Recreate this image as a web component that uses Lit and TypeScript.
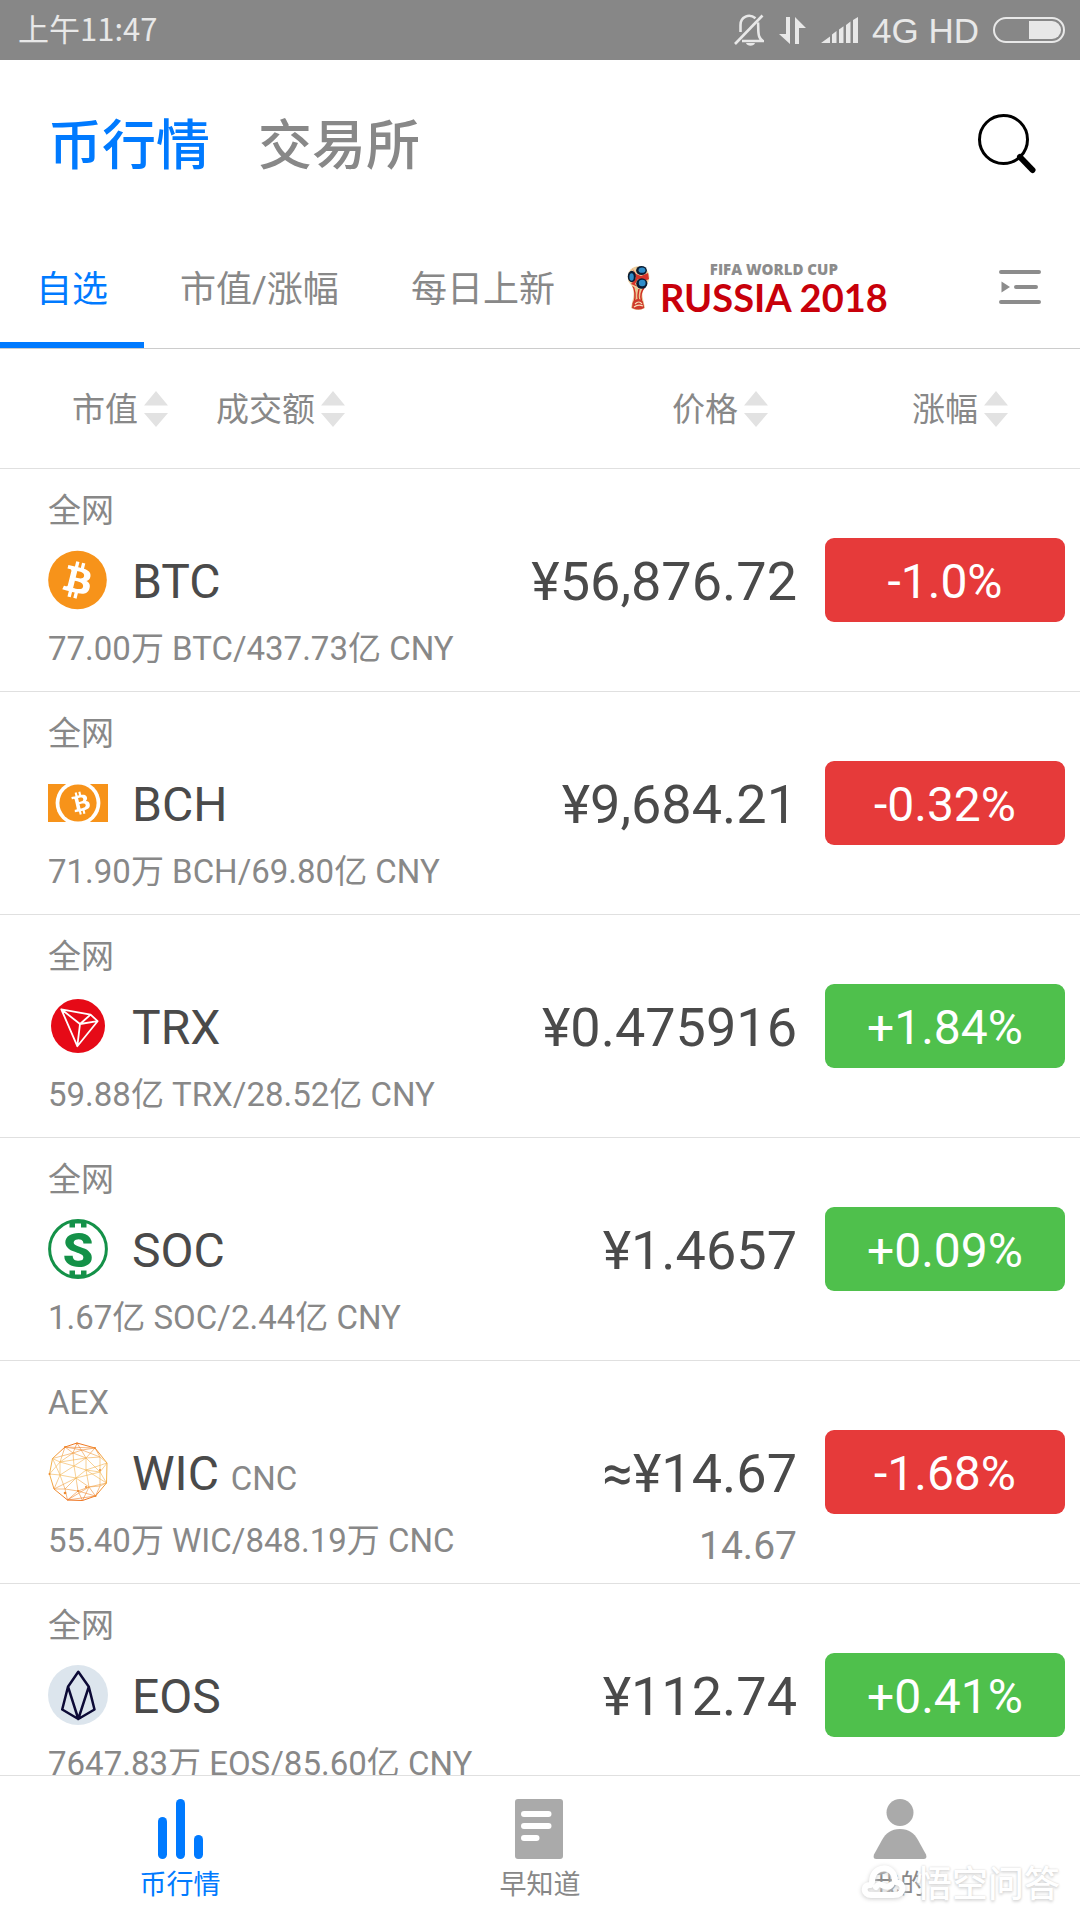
import { LitElement, html, css, svg } from "lit";
import { customElement, property, state } from "lit/decorators.js";
import { classMap } from "lit/directives/class-map.js";

interface Coin {
  market: string;
  symbol: string;
  pair?: string;
  volume: string;
  price: string;
  sub?: string;
  change: string;
}

const COINS: Coin[] = [
  { market: "全网", symbol: "BTC", volume: "77.00万 BTC/437.73亿 CNY", price: "¥56,876.72", change: "-1.0%" },
  { market: "全网", symbol: "BCH", volume: "71.90万 BCH/69.80亿 CNY", price: "¥9,684.21", change: "-0.32%" },
  { market: "全网", symbol: "TRX", volume: "59.88亿 TRX/28.52亿 CNY", price: "¥0.475916", change: "+1.84%" },
  { market: "全网", symbol: "SOC", volume: "1.67亿 SOC/2.44亿 CNY", price: "¥1.4657", change: "+0.09%" },
  { market: "AEX", symbol: "WIC", pair: "CNC", volume: "55.40万 WIC/848.19万 CNC", price: "≈¥14.67", sub: "14.67", change: "-1.68%" },
  { market: "全网", symbol: "EOS", volume: "7647.83万 EOS/85.60亿 CNY", price: "¥112.74", change: "+0.41%" },
];

const COIN_MARK =
  "M23.189 14.02c.314-2.096-1.283-3.223-3.465-3.975l.708-2.84-1.728-.43-.69 2.765c-.454-.114-.92-.22-1.385-.326l.695-2.783L15.596 6l-.708 2.839c-.376-.086-.746-.17-1.104-.26l.002-.009-2.384-.595-.46 1.846s1.283.294 1.256.312c.7.175.826.638.805 1.006l-.806 3.235c.048.012.11.03.18.057l-.183-.045-1.13 4.532c-.086.212-.303.531-.793.41.018.025-1.256-.313-1.256-.313l-.858 1.978 2.25.561c.418.105.828.215 1.231.318l-.715 2.872 1.727.43.708-2.84c.472.127.93.245 1.378.357l-.706 2.828 1.728.43.715-2.866c2.948.558 5.164.333 6.097-2.333.752-2.146-.037-3.385-1.588-4.192 1.13-.26 1.98-1.003 2.207-2.538zm-3.95 5.538c-.533 2.147-4.148.986-5.32.695l.95-3.805c1.172.293 4.929.872 4.37 3.11zm.535-5.569c-.487 1.953-3.495.96-4.47.717l.86-3.45c.975.243 4.118.696 3.61 2.733z";

const COIN_ICONS: Record<string, unknown> = {
  BTC: svg`
    <circle cx="29.500" cy="30" r="29.300" fill="#f7931a"/>
    <path d="${COIN_MARK}" fill="#fff" transform="translate(-1) scale(1.875)"/>`,
  BCH: svg`
    <rect y="11" width="60" height="38" fill="#f7931a"/>
    <clipPath id="bch"><rect y="11" width="60" height="38"/></clipPath>
    <circle cx="30" cy="30" r="22.400" fill="#fff"/>
    <circle cx="30" cy="30" r="18.600" fill="#f7931a" clip-path="url(#bch)"/>
    <path d="${COIN_MARK}" fill="#fff" transform="translate(32.4 30) rotate(-27) scale(1.17) translate(-16 -16)"/>`,
  TRX: svg`
    <circle cx="30" cy="30" r="27" fill="#e60a17"/>
    <path d="M13.3 13.3 42.6 18.6 49.6 25.2 29.3 50.2ZM13.3 13.3 32 28 29.3 50.2M32 28 42.6 18.6M32 28 49.6 25.2"
      fill="none" stroke="#fff" stroke-width="1.8" stroke-linejoin="round"/>`,
  SOC: svg`
    <circle cx="30" cy="30" r="28.4" fill="#fff" stroke="#149148" stroke-width="3"/>
    <path d="M21.5 3h17v5.5h-5.500v-4h-6v4h-5.500zM21.500 57h17v-5.500h-5.500v4h-6v-4h-5.500z" fill="#149148"/>
    <text x="30" y="47.500" text-anchor="middle" font-family="Roboto, sans-serif" font-weight="900" font-size="49" fill="#149148">S</text>`,
  WIC: svg`
    <linearGradient id="wic" x1="0" y1="0" x2="0" y2="1">
      <stop offset="0" stop-color="#ee7420"/><stop offset=".3" stop-color="#f3b04c"/>
      <stop offset=".6" stop-color="#f2b44e"/><stop offset="1" stop-color="#ee7420"/>
    </linearGradient>
    <g fill="none" stroke="url(#wic)" stroke-linejoin="round">
      <path stroke-width="1" d="M29 1 17 5 4.500 16.500 1.500 32 6 47 19.500 58 34.500 58.500 47.500 54 58.500 41 59 21 47 6Z"/>
      <path stroke-width=".6" d="M29 1 38 16 47 6 17 5 25 11 29 1M17 5 12 20 4.500 16.500 25 11 38 16 52 15 47 6M52 15 59 21 38 28 38 16 26 24 25 11 12 20 26 24 38 28 28 36 26 24 12 33 12 20 1.500 32 12 33 28 36 17 47 12 33 6 47 17 47 19.500 58 30 49 17 47M30 49 28 36 41 45 38 28 58.500 41 41 45 30 49 34.500 58.500 41 45 47.500 54 52 44 41 45M52 44 52 30 59 21M52 15 52 30 38 28M52 30 58.500 41 52 44M17 5 34 8 47 6M34 8 52 15M25 11 34 8M6 47 28 36 52 30M4.500 16.500 12 33M19.500 58 41 45M30 49 47.500 54 19.500 58M12 20 38 16 52 30"/>
    </g>
    <g fill="#ee8a30">
      <circle cx="29" cy="1.500" r="1"/><circle cx="17" cy="5" r="1"/><circle cx="47" cy="6" r="1"/>
      <circle cx="17" cy="51" r="1.300"/><circle cx="30" cy="49" r="1"/><circle cx="52" cy="28" r="1"/>
      <circle cx="38" cy="45" r="1"/><circle cx="1.500" cy="32" r="1"/><circle cx="47.500" cy="54" r="1"/>
    </g>`,
  EOS: svg`
    <circle cx="30" cy="30" r="30" fill="#dce5ed"/>
    <path d="M30.300 6.800 20 21.700 14.200 44.500 30.300 54 46.500 44.500 40.800 21.700ZM20 21.700 30.300 54 40.800 21.700"
      fill="none" stroke="#0c0a36" stroke-width="2.500" stroke-linejoin="round"/>`,
};

@customElement("status-bar")
class StatusBar extends LitElement {
  static styles = css`
    :host {
      display: flex;
      align-items: center;
      justify-content: space-between;
      height: 60px;
      padding: 0 15px 0 18px;
      background: #878787;
      color: #e8e8e8;
    }
    .time {
      font: 400 31px/56px "Noto Sans CJK SC", sans-serif;
      padding-bottom: 4px;
    }
    .status,
    .icons {
      display: flex;
      align-items: center;
    }
    .status {
      gap: 14px;
    }
    .icons {
      gap: 15px;
    }
    .net {
      font: 35px/58px "Liberation Sans", sans-serif;
      padding-top: 2px;
    }
    svg {
      display: block;
    }
  `;

  render() {
    return html`
      <span class="time">上午11:47</span>
      <div class="status">
        <div class="icons">
          <svg width="30" height="32" viewBox="0 0 30 32" fill="none" stroke="#e8e8e8" stroke-width="2.6">
            <path d="M21.500 4.300C15 -1 6.500 3 6.500 11v7M24 8.500c.6 4-.3 10 1.200 14 .7 2.300 2 3.400 3.800 4.500H8" />
            <path d="M1 30 28.500 1.500" stroke-width="2.600" />
            <path d="M12 29h9c-1 3.500-8 3.500-9 0z" fill="#e8e8e8" stroke="none" />
          </svg>
          <svg width="27" height="27" viewBox="0 0 27 27" fill="#e8e8e8">
            <path d="M7 0h4v27L0 17h7zM20 27h-4V0l11 11h-7z" />
          </svg>
          <svg width="37" height="26" viewBox="0 0 37 26" fill="#e8e8e8">
            <path d="M0 26 9 19.500V26zM11 17.500 15.500 14v12H11zM18 12.500 22.500 9.200V26H18zM25 8 29.500 4.500V26H25zM32 3 37 0v26h-5z" />
          </svg>
        </div>
        <span class="net">4G HD</span>
        <svg width="72" height="26" viewBox="0 0 72 26">
          <rect x="1" y="1" width="70" height="24" rx="12" fill="none" stroke="#e8e8e8" stroke-width="2" />
          <path d="M36 4h23a9 9 0 0 1 0 18H36z" fill="#e8e8e8" />
        </svg>
      </div>
    `;
  }
}

@customElement("coin-row")
class CoinRow extends LitElement {
  @property({ attribute: false }) coin!: Coin;

  static styles = css`
    :host {
      display: grid;
      grid-template-columns: 1fr auto 240px;
      grid-template-rows: 44px 84px 48px;
      grid-template-areas:
        "market . ."
        "name price change"
        "volume sub .";
      column-gap: 28px;
      row-gap: 7px;
      padding: 18px 15px 14px 48px;
      border-bottom: 1px solid #e0e0e0;
      white-space: nowrap;
    }
    .market {
      grid-area: market;
      font-size: 33px;
      line-height: 48px;
      color: #888;
    }
    .name {
      grid-area: name;
      display: flex;
      align-items: center;
      gap: 24px;
    }
    .symbol {
      padding-top: 4px;
      font-size: 48px;
      line-height: 56px;
      color: #4a4a4a;
    }
    .pair {
      font-size: 33px;
      line-height: 33px;
      color: #888;
    }
    .volume {
      grid-area: volume;
      font-size: 33px;
      line-height: 40px;
      color: #888;
      width: 0;
    }
    .price {
      grid-area: price;
      justify-self: end;
      padding-top: 4px;
      font-size: 54px;
      line-height: 80px;
      color: #4a4a4a;
    }
    .sub {
      grid-area: sub;
      justify-self: end;
      font-size: 39px;
      line-height: 50px;
      color: #888;
    }
    .change {
      grid-area: change;
      padding-top: 4px;
      border-radius: 9px;
      font-size: 48px;
      line-height: 80px;
      text-align: center;
      color: #fff;
      background: #4fc04c;
    }
    .down {
      background: #e63a3a;
    }
    svg {
      display: block;
      flex: none;
    }
  `;

  render() {
    const c = this.coin;
    return html`
      <span class="market">${c.market}</span>
      <div class="name">
        <svg width="60" height="60" viewBox="0 0 60 60" aria-hidden="true">${COIN_ICONS[c.symbol]}</svg>
        <span class="symbol">${c.symbol}${c.pair ? html` <span class="pair">${c.pair}</span>` : ""}</span>
      </div>
      <span class="price">${c.price}</span>
      <span class=${classMap({ change: true, down: c.change.startsWith("-") })}>${c.change}</span>
      <span class="volume">${c.volume}</span>
      ${c.sub ? html`<span class="sub">${c.sub}</span>` : ""}
    `;
  }
}

@customElement("app-root")
class AppRoot extends LitElement {
  @state() private tab = 0;

  static styles = css`
    :host {
      display: flex;
      flex-direction: column;
      height: 100vh;
      background: #fff;
      font-family: "Roboto", "Noto Sans CJK SC", sans-serif;
      color: #888;
    }
    button {
      border: 0;
      padding: 0;
      background: none;
      font: inherit;
      color: inherit;
      cursor: pointer;
    }
    svg {
      display: block;
      flex: none;
    }
    .head {
      display: flex;
      align-items: center;
      gap: 48px;
      height: 168px;
      padding: 0 42px 0 48px;
    }
    .title {
      padding-top: 6px;
      font-size: 54px;
      line-height: 64px;
      font-weight: 500;
    }
    .on,
    .title.on {
      color: #007aff;
    }
    .search,
    .menu {
      margin-left: auto;
    }
    .tabs {
      display: flex;
      align-items: stretch;
      height: 120px;
      padding-right: 39px;
      border-bottom: 1px solid #ccc;
    }
    .tab {
      padding: 10px 36px 0;
      border-bottom: 6px solid transparent;
      font-size: 36px;
      line-height: 48px;
      white-space: nowrap;
    }
    .tab.on {
      border-bottom-color: #007aff;
    }
    .cup {
      display: flex;
      align-items: center;
      gap: 10px;
      margin-left: 36px;
      text-decoration: none;
      white-space: nowrap;
    }
    .cup-text {
      display: flex;
      flex-direction: column;
      align-items: center;
    }
    .cup-top {
      font: 800 15px/18px "Open Sans", sans-serif;
      color: #8c8c8c;
    }
    .cup-main {
      font: 700 38px/38px "Lato", sans-serif;
      color: #c8000a;
    }
    .sorts {
      display: flex;
      align-items: center;
      gap: 48px;
      height: 119px;
      padding: 0 72px;
      border-bottom: 1px solid #e0e0e0;
    }
    .sort {
      display: flex;
      align-items: center;
      gap: 6px;
      font-size: 33px;
      line-height: 40px;
    }
    .label {
      padding-top: 2px;
    }
    .right {
      display: flex;
      gap: 144px;
      margin-left: auto;
    }
    .list {
      flex: 1;
      min-height: 0;
      overflow-y: auto;
      scrollbar-width: none;
      margin: 0;
      padding: 0;
      list-style: none;
    }
    .nav {
      position: relative;
      display: grid;
      grid-template-columns: repeat(3, 1fr);
      height: 144px;
      border-top: 1px solid #e0e0e0;
    }
    .item {
      display: flex;
      flex-direction: column;
      align-items: center;
      gap: 10px;
      padding-top: 23px;
      font-size: 27px;
      line-height: 32px;
      color: #888;
      text-decoration: none;
    }
    .item.on {
      color: #007aff;
    }
    .mark {
      position: absolute;
      right: 20px;
      bottom: 17px;
      display: flex;
      align-items: center;
      gap: 10px;
      font: 500 36px/44px "Noto Sans CJK SC", sans-serif;
      color: #fff;
      text-shadow: 0 0 2px #ccc, 0 2px 3px #ddd;
      pointer-events: none;
    }
    .mark svg {
      filter: drop-shadow(0 1px 2px #ccc);
    }
  `;

  private sort(label: string) {
    return html`<button class="sort">
      <span class="label">${label}</span>
      <svg width="24" height="36" viewBox="0 0 24 36" fill="#e2e2e2"><path d="M12 0 24 14.500H0zM12 36 0 22h24z" /></svg>
    </button>`;
  }

  render() {
    return html`
      <status-bar></status-bar>
      <header class="head">
        <button class="title on">币行情</button>
        <button class="title">交易所</button>
        <button class="search" aria-label="搜索">
          <svg width="60" height="60" viewBox="0 0 60 60" fill="none" stroke="#000">
            <ellipse cx="25.500" cy="25.500" rx="24" ry="24" stroke-width="3" />
            <path d="M42 43 54.500 56" stroke-width="6" stroke-linecap="round" />
          </svg>
        </button>
      </header>
      <div class="tabs">
        ${["自选", "市值/涨幅", "每日上新"].map(
          (t, i) => html`<button class=${classMap({ tab: true, on: this.tab === i })} @click=${() => (this.tab = i)}>${t}</button>`
        )}
        <a class="cup" href="#cup">
          <svg width="23" height="46" viewBox="0 0 23 46">
            <path d="M3 15C6 23 8 27 5.500 36L4 43q7 4 14 0L16 34c-2-7 1-12 4-18z" fill="#e9c894" />
            <path d="M5 19C9 26 9 31 7 38l3 6M18 21c-4 6-5 9-3.500 15l2 7M12 24c-1 6-2 8 0 12" fill="none" stroke="#cf2a20" stroke-width="1.400" />
            <path d="M5.500 38c3-6 9-4 10.500-1l1 6q-5 3-12 0z" fill="#cf3a2c" />
            <path d="M8 39q4-4 7 0M7 42q4-3 9-1" fill="none" stroke="#f6dfb8" stroke-width="1.200" />
            <circle cx="11.500" cy="12" r="10.800" fill="#efcf9e" />
            <path d="M5 3 9 9 14 11 21 8 22 14 18 16 11 14 8 19 11 22 4 19 9 13 7 7z" fill="#d6342a" />
            <ellipse cx="4.800" cy="11.500" rx="4" ry="5.800" fill="#0b1c33" />
            <ellipse cx="4.600" cy="12" rx="2.200" ry="3.800" fill="#2f8dc9" />
            <ellipse cx="14.500" cy="5.500" rx="5.400" ry="4.500" fill="#0b1c33" />
            <ellipse cx="15" cy="5.200" rx="3.400" ry="2.600" fill="#2f8dc9" />
            <ellipse cx="14.800" cy="18.500" rx="5.600" ry="5.200" fill="#0b1c33" />
            <ellipse cx="15.200" cy="18" rx="3.400" ry="3.200" fill="#2f8dc9" />
          </svg>
          <span class="cup-text">
            <span class="cup-top">FIFA WORLD CUP</span>
            <span class="cup-main">RUSSIA 2018</span>
          </span>
        </a>
        <button class="menu" aria-label="菜单">
          <svg width="42" height="36" viewBox="0 0 42 36" fill="none" stroke="#8c8c8c" stroke-width="4" stroke-linecap="round">
            <path d="M2 2h38M17 17h20M2 32h38" />
            <path d="M2.500 11.500 11 17l-8.500 5.500z" fill="#8c8c8c" stroke="none" />
          </svg>
        </button>
      </div>
      <div class="sorts">
        ${this.sort("市值")} ${this.sort("成交额")}
        <div class="right">${this.sort("价格")} ${this.sort("涨幅")}</div>
      </div>
      <ul class="list">
        ${COINS.map((c) => html`<li><coin-row .coin=${c}></coin-row></li>`)}
      </ul>
      <nav class="nav">
        <a class="item on" href="#market">
          <svg width="60" height="60" viewBox="0 0 60 60" fill="#007aff">
            <rect x="8" y="18" width="9" height="42" rx="4.500" />
            <rect x="26" width="9" height="60" rx="4.500" />
            <rect x="44" y="36" width="9" height="24" rx="4.500" />
          </svg>
          币行情
        </a>
        <a class="item" href="#news">
          <svg width="60" height="60" viewBox="0 0 60 60">
            <rect x="5" width="48" height="60" rx="3" fill="#aaa" />
            <path d="M14 15h24.500M14 27h24.500M14 39h12.500" stroke="#fff" stroke-width="6" stroke-linecap="round" />
          </svg>
          早知道
        </a>
        <a class="item" href="#me">
          <svg width="60" height="60" viewBox="0 0 60 60" fill="#aaa">
            <circle cx="30" cy="13.500" r="13.500" />
            <path d="M30 30c9 0 14 4 18 11l8 14.500q1.500 4.500-2.500 4.500h-47q-4 0-2.500-4.500L12 41c4-7 9-11 18-11z" />
          </svg>
          我的
        </a>
        <div class="mark">
          <svg width="45" height="36" viewBox="0 0 45 36" fill="none" stroke="#fff" stroke-width="6" stroke-linecap="round">
            <path d="M10 22C1 21 2 32 10 32H33C44 32 44 20 35 19M11 19C11 1 34 1 34 18M15 24c5-7 10 4 15-2" />
          </svg>
          悟空问答
        </div>
      </nav>
    `;
  }
}
